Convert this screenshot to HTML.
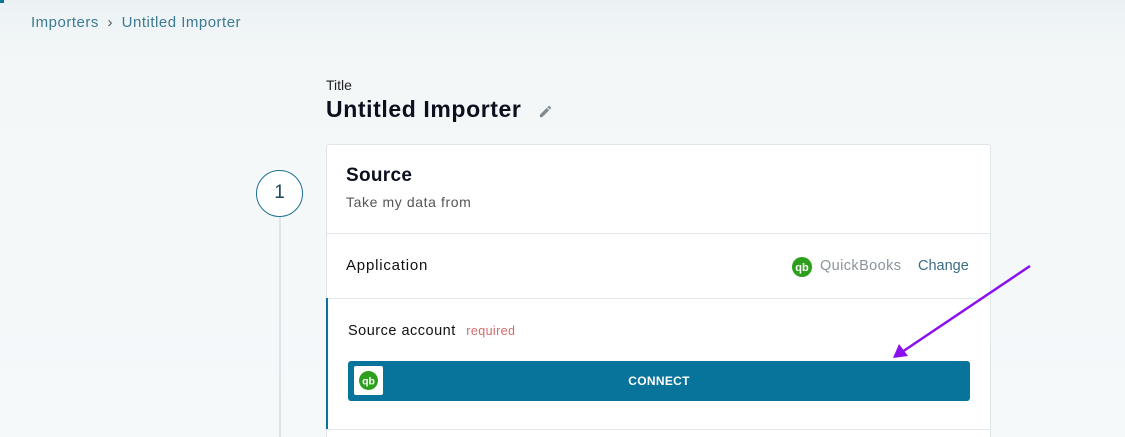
<!DOCTYPE html>
<html><head><meta charset="utf-8"><style>
*{margin:0;padding:0;box-sizing:border-box}
html,body{width:1125px;height:437px;overflow:hidden}
body{background:linear-gradient(180deg,#ecf2f4 0%,#f3f7f8 60px,#f5f9fa 100%);font-family:"Liberation Sans",sans-serif;position:relative}
.a{position:absolute}
</style></head><body>
<div class="a" style="left:0;top:0;width:4px;height:3px;background:#0a7399"></div>
<div class="a" style="left:31px;top:14px;font-size:15px;letter-spacing:.5px;color:#3d7a93">Importers <span style="margin:0 4px;color:#555">›</span> Untitled Importer</div>
<div class="a" style="left:326px;top:77px;font-size:14px;color:#222">Title</div>
<div class="a" style="left:326px;top:96px;font-size:23px;letter-spacing:.6px;font-weight:bold;color:#0b0f1e">Untitled Importer</div>
<svg class="a" style="left:538px;top:104px" width="15" height="15" viewBox="0 0 24 24"><path fill="#7d8a90" d="M3 17.25V21h3.75L17.8 9.94l-3.75-3.75L3 17.25zM20.7 7.04a1 1 0 000-1.41l-2.34-2.34a1 1 0 00-1.41 0l-1.83 1.83 3.75 3.75 1.83-1.83z"/></svg>
<div class="a" style="left:279px;top:216px;width:2px;height:221px;background:#dde5e9"></div>
<div class="a" style="left:256px;top:170px;width:47px;height:47px;border-radius:50%;border:1.5px solid #1b6f91;background:#fff;text-align:center;line-height:44px;font-size:19px;color:#1d4a5e">1</div>
<div class="a" style="left:326px;top:144px;width:665px;height:300px;background:#fff;border:1px solid #dfe6ea;border-radius:3px"></div>
<div class="a" style="left:346px;top:165px;font-size:19px;letter-spacing:.3px;font-weight:bold;color:#0b0f1e">Source</div>
<div class="a" style="left:346px;top:194px;font-size:14px;letter-spacing:.6px;color:#555">Take my data from</div>
<div class="a" style="left:327px;top:233px;width:663px;height:1px;background:#e3e9ec"></div>
<div class="a" style="left:346px;top:257px;font-size:15px;letter-spacing:.8px;color:#111">Application</div>
<svg class="a" style="left:792px;top:257px" width="20" height="20" viewBox="0 0 20 20"><circle cx="10" cy="10" r="10" fill="#2ca01c"/><text x="10" y="14" font-size="11" font-weight="bold" fill="#fff" text-anchor="middle" font-family="Liberation Sans">qb</text></svg>
<div class="a" style="left:820px;top:258px;font-size:14.5px;letter-spacing:.4px;color:#8a959b">QuickBooks</div>
<div class="a" style="left:918px;top:258px;font-size:14.5px;color:#3a6e86">Change</div>
<div class="a" style="left:327px;top:298px;width:663px;height:1px;background:#e3e9ec"></div>
<div class="a" style="left:326px;top:298px;width:2px;height:131px;background:#0a7399"></div>
<div class="a" style="left:348px;top:323px;font-size:14.5px;letter-spacing:.5px;color:#111">Source account <span style="font-size:12.5px;letter-spacing:.4px;color:#d16b6b;margin-left:6px">required</span></div>
<div class="a" style="left:348px;top:361px;width:622px;height:40px;background:#08739b;border-radius:3px;color:#fff;font-size:12px;font-weight:bold;text-align:center;line-height:40px;letter-spacing:.3px">CONNECT</div>
<div class="a" style="left:354px;top:366px;width:29px;height:29px;background:#fff;border-radius:2px"></div>
<svg class="a" style="left:359px;top:371px" width="19" height="19" viewBox="0 0 20 20"><circle cx="10" cy="10" r="10" fill="#2ca01c"/><text x="10" y="14" font-size="11" font-weight="bold" fill="#fff" text-anchor="middle" font-family="Liberation Sans">qb</text></svg>
<div class="a" style="left:327px;top:429px;width:663px;height:1px;background:#e3e9ec"></div>
<svg class="a" style="left:0;top:0" width="1125" height="437"><line x1="1030" y1="266" x2="902" y2="352" stroke="#8a10f0" stroke-width="2.5"/><polygon points="893,358 899,344 908,356" fill="#8a10f0"/></svg>
</body></html>
